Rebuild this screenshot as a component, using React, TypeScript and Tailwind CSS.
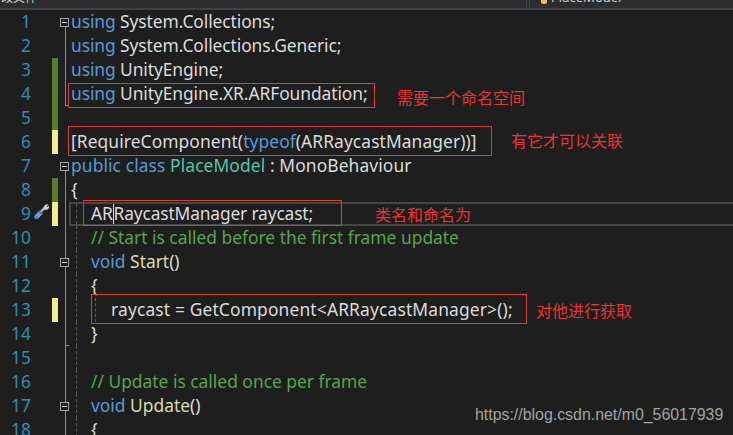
type Span = { t: string; c?: string };
type Fold = 'box' | 'boxline' | 'line' | 'end';

const KW = 'text-[#569cd6]';
const TY = 'text-[#4ec9b0]';
const CM = 'text-[#57a64a]';
const MT = 'text-[#dcdcaa]';

// marker: green = saved change, yellow = unsaved change
// fit: small tracking nudge so the line ends where the reference font ends it
const lines: { marker?: 'green' | 'yellow'; fold?: Fold; indent?: number; fit?: string; code: Span[] }[] = [
  { fold: 'box', fit: 'tracking-[-0.08px]', code: [{ t: 'using', c: KW }, { t: ' System.Collections;' }] },
  { fold: 'line', fit: 'tracking-[-0.08px]', code: [{ t: 'using', c: KW }, { t: ' System.Collections.Generic;' }] },
  { marker: 'green', fold: 'line', fit: 'tracking-[-0.08px]', code: [{ t: 'using', c: KW }, { t: ' UnityEngine;' }] },
  { marker: 'green', fold: 'end', fit: 'tracking-[-0.08px]', code: [{ t: 'using', c: KW }, { t: ' UnityEngine.XR.ARFoundation;' }] },
  { marker: 'green', code: [] },
  { marker: 'yellow', fit: 'tracking-[0.08px]', code: [{ t: '[RequireComponent(' }, { t: 'typeof', c: KW }, { t: '(ARRaycastManager))]' }] },
  { fold: 'box', fit: 'tracking-[0.1px]', code: [{ t: 'public class', c: KW }, { t: ' ' }, { t: 'PlaceModel', c: TY }, { t: ' : MonoBehaviour' }] },
  { marker: 'green', fold: 'line', code: [{ t: '{' }] },
  { marker: 'yellow', fold: 'line', indent: 1, fit: 'tracking-[-0.17px]', code: [{ t: 'AR' }, { t: '|' }, { t: 'RaycastManager raycast;' }] },
  { fold: 'line', indent: 1, code: [{ t: '// Start is called before the first frame update', c: CM }] },
  { fold: 'boxline', indent: 1, code: [{ t: 'void', c: KW }, { t: ' ' }, { t: 'Start', c: MT }, { t: '()' }] },
  { fold: 'line', indent: 1, code: [{ t: '{' }] },
  { marker: 'yellow', fold: 'line', indent: 2, fit: 'tracking-[0.15px]', code: [{ t: 'raycast = GetComponent<ARRaycastManager>();' }] },
  { fold: 'end', indent: 1, code: [{ t: '}' }] },
  { fold: 'line', indent: 1, code: [] },
  { fold: 'line', indent: 1, code: [{ t: '// Update is called once per frame', c: CM }] },
  { fold: 'boxline', indent: 1, code: [{ t: 'void', c: KW }, { t: ' ' }, { t: 'Update', c: MT }, { t: '()' }] },
  { fold: 'line', indent: 1, code: [{ t: '{' }] },
];

function FoldCell({ fold }: { fold?: Fold }) {
  if (!fold) return <span className="ml-[2px] h-full w-[9px]" />;
  const hasBox = fold === 'box' || fold === 'boxline';
  return (
    <span className="ml-[2px] flex h-full w-[9px] flex-col items-center">
      <span className={`ml-[2px] w-px flex-1 ${fold === 'box' ? '' : 'bg-[#8a8a8a]'}`} />
      {hasBox && (
        <span className="flex h-[9px] w-[9px] items-center justify-center border border-[#a5a5a5]">
          <span className="h-px w-[5px] bg-[#d0d0d0]" />
        </span>
      )}
      <span className="ml-[2px] w-px flex-1 bg-[#8a8a8a]" />
      {fold === 'end' && <span className="h-px w-[4px] self-end bg-[#8a8a8a]" />}
    </span>
  );
}

function Screwdriver() {
  return (
    <svg width="17" height="17" viewBox="0 0 17 17" className="absolute left-[33px] top-[1px]">
      <path d="M1 13 L6 7.5 Q7.5 7 9 8.5 Q10 10 9.5 11 L4.5 16 Q2.5 16.5 1.5 15.5 Q0.8 14.5 1 13 Z" fill="#3f7fc4" />
      <path d="M3 13.5 L6.5 10 M5 14.5 L8 11.5" stroke="#cfe2f5" strokeWidth="1" />
      <path d="M8 8.5 L11.5 5" stroke="#b5b5b5" strokeWidth="2.4" />
      <path d="M10.5 4 L13 1.2 L15.5 1.5 L13.6 3.6 L14.2 4.2 L16 2.6 L16 5 L13.5 7 L11.5 6.5 Z" fill="#d8d8d8" />
    </svg>
  );
}

export default function App() {
  return (
    <div className="relative h-[435px] w-[733px] overflow-hidden bg-[#1e1e1e] font-['Noto_Sans',sans-serif]">
      {/* tab strip, cut off by the top of the picture */}
      <div className="flex h-[10px] items-start overflow-hidden border-b-2 border-[#3f3f46] bg-[#2d2d30]">
        <span className="-mt-[9px] w-[526px] pl-[1px] font-['Noto_Sans_CJK_SC',sans-serif] text-[12px] leading-[12px] text-[#d0d0d0]">
          改文件
        </span>
        <span className="h-full w-[4px] border-x border-[#3f3f46]" />
        <span className="ml-[11px] h-[4px] w-[6px] rounded-b-[2px] bg-[#e8b878]" />
        <span className="-mt-[10px] ml-[4px] text-[13px] leading-[14px] text-[#d0d0d0]">PlaceModel</span>
      </div>

      {lines.map((line, i) => {
        const n = i + 1;
        const current = n === 9;
        return (
          <div key={n} className="relative flex h-[24px] items-center">
            <span className="-mt-[2px] w-[31px] text-right text-[17.4px] leading-[24px] text-[#2b91af]">{n}</span>
            {current && <Screwdriver />}
            <span className="ml-[21px] h-full w-[6px]">
              {line.marker === 'green' && <span className="block h-full bg-[#5a7a2e]" />}
              {line.marker === 'yellow' && <span className="block h-full bg-[#efef91]" />}
            </span>
            <FoldCell fold={line.fold} />
            <div
              className={`flex h-full flex-1 items-center whitespace-pre text-[17.4px] leading-[20px] text-[#dcdcdc] ${
                line.fit ?? ''
              } ${current ? 'border-y-2 border-l-2 border-[#464646]' : 'pl-[2px]'}`}
            >
              {line.indent && (
                <span className="ml-[5px] h-full w-[15px] shrink-0 border-l border-dashed border-[#5a5a5a]" />
              )}
              {line.indent === 2 && (
                <span className="ml-[4px] h-full w-[16px] shrink-0 border-l border-dashed border-[#5a5a5a]" />
              )}
              {line.code.map((s, j) =>
                s.t === '|' ? (
                  <span key={j} className="h-[20px] w-px shrink-0 bg-[#dcdcdc]" />
                ) : (
                  <span key={j} className={`-mt-[2px] ${s.c ?? ''}`}>
                    {s.t}
                  </span>
                ),
              )}
            </div>
          </div>
        );
      })}

      {/* red annotation boxes */}
      <span className="absolute left-[68px] top-[83px] h-[25px] w-[307px] border border-[#e03c3c]" />
      <span className="absolute left-[68px] top-[126px] h-[30px] w-[424px] border border-[#e03c3c]" />
      <span className="absolute left-[83px] top-[200px] h-[26px] w-[259px] border border-[#e03c3c]" />
      <span className="absolute left-[91px] top-[294px] h-[30px] w-[436px] border border-[#e03c3c]" />

      {/* red annotation text */}
      <div className="font-['Noto_Sans_CJK_SC',sans-serif] text-[16px] leading-[20px] text-[#ec3232]">
        <span className="absolute left-[397px] top-[87px]">需要一个命名空间</span>
        <span className="absolute left-[511px] top-[130px]">有它才可以关联</span>
        <span className="absolute left-[375px] top-[204px]">类名和命名为</span>
        <span className="absolute left-[536px] top-[300px]">对他进行获取</span>
      </div>

      <span className="absolute left-[475px] top-[406px] font-['Liberation_Sans',sans-serif] text-[15.9px] leading-[18px] text-[#a3a3a3]">
        https://blog.csdn.net/m0_56017939
      </span>
    </div>
  );
}
